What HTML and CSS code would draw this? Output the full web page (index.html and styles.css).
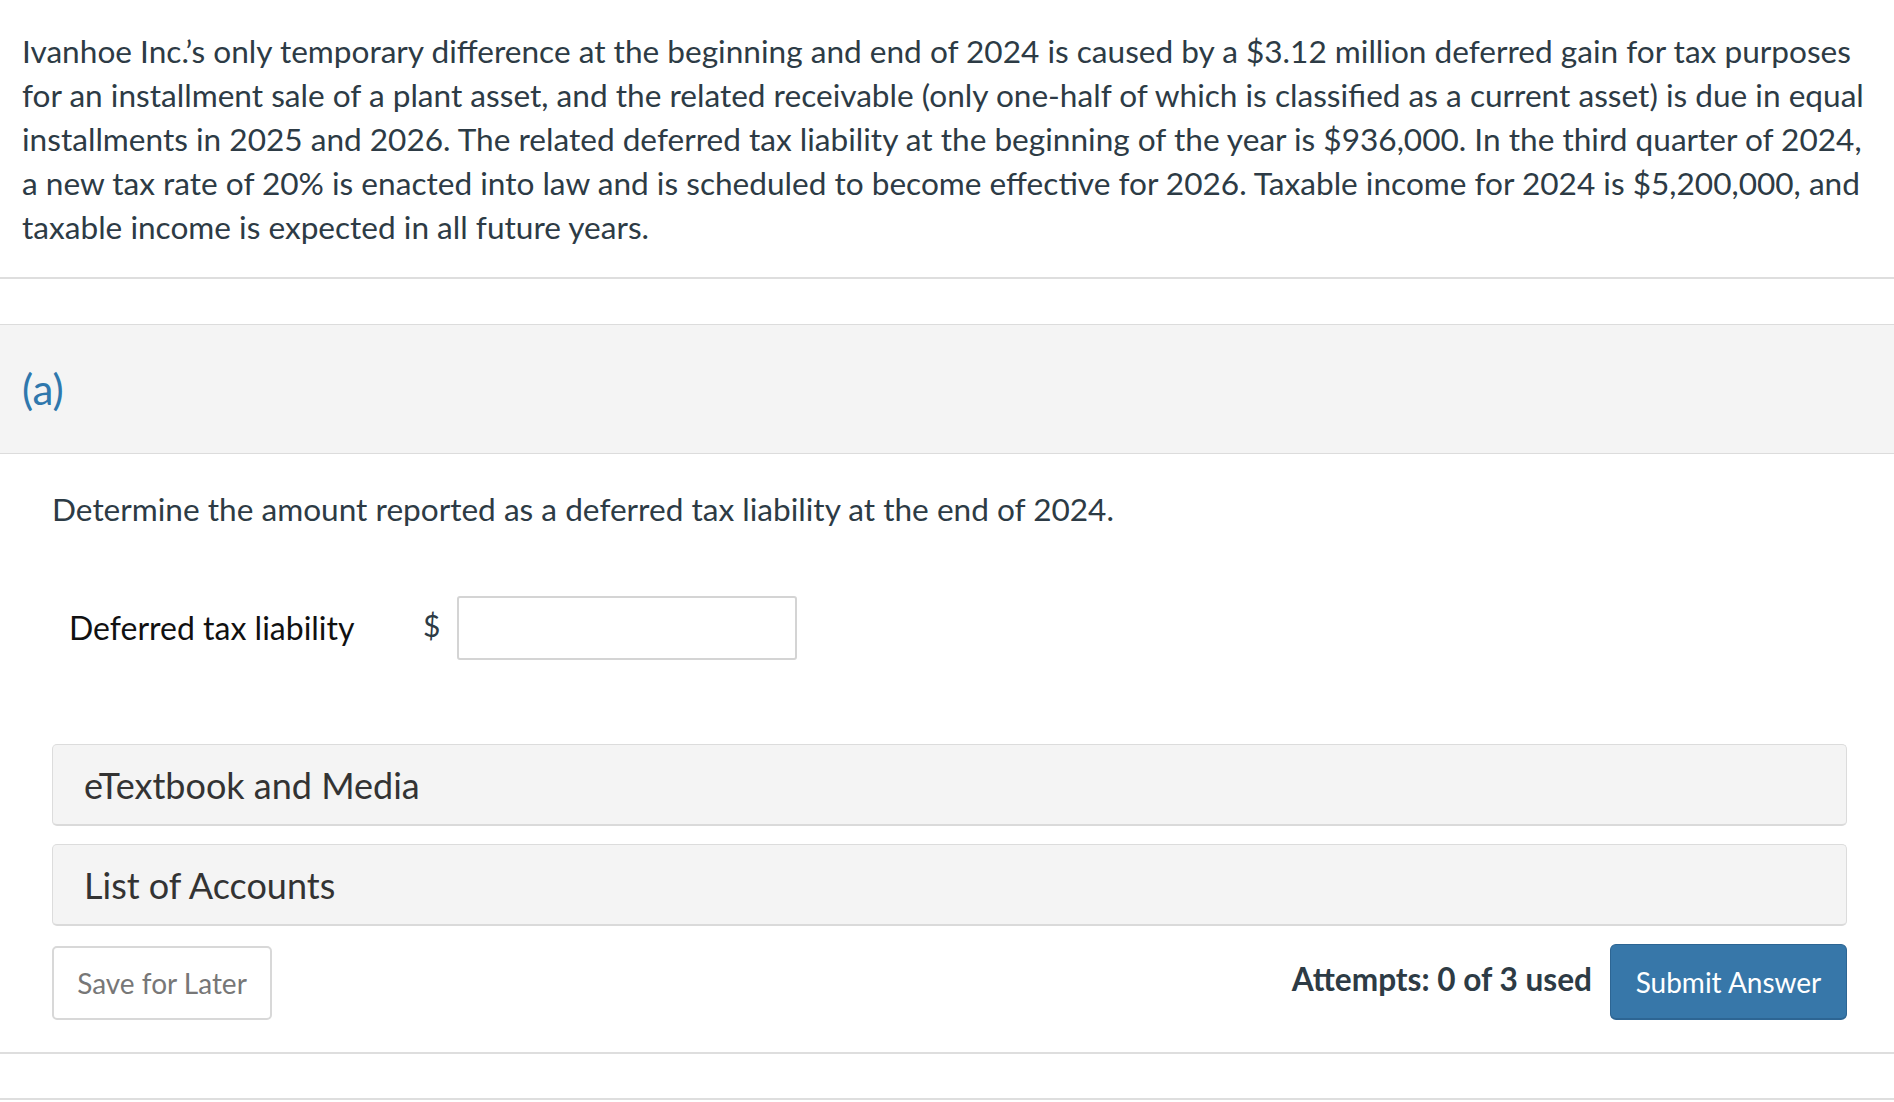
FILE: index.html
```html
<!DOCTYPE html>
<html lang="en">
<head>
<meta charset="utf-8">
<title>Question</title>
<link rel="stylesheet" href="styles.css">
</head>
<body>
<div class="stem">
  <p>Ivanhoe Inc.’s only temporary difference at the beginning and end of 2024 is caused by a $3.12 million deferred gain for tax purposes for an installment sale of a plant asset, and the related receivable (only one-half of which is classified as a current asset) is due in equal installments in 2025 and 2026. The related deferred tax liability at the beginning of the year is $936,000. In the third quarter of 2024, a new tax rate of 20% is enacted into law and is scheduled to become effective for 2026. Taxable income for 2024 is $5,200,000, and taxable income is expected in all future years.</p>
</div>
<div class="part">
  <div class="part-head"><span class="part-label">(a)</span></div>
  <div class="part-body">
    <p class="prompt">Determine the amount reported as a deferred tax liability at the end of 2024.</p>
    <div class="answer-row">
      <label class="answer-label" for="dtl">Deferred tax liability</label>
      <span class="dollar">$</span>
      <input id="dtl" class="answer-input" type="text">
    </div>
    <div class="card">eTextbook and Media</div>
    <div class="card">List of Accounts</div>
    <div class="actions">
      <button class="btn-save" type="button">Save for Later</button>
      <div class="spacer"></div>
      <span class="attempts">Attempts: 0 of 3 used</span>
      <button class="btn-submit" type="button">Submit Answer</button>
    </div>
  </div>
</div>
<div class="after"></div>
</body>
</html>
```
FILE: styles.css
```css
* { box-sizing: border-box; }
html, body { margin: 0; padding: 0; background: #fff; }
body {
  font-family: Lato, "Open Sans", sans-serif;
  color: #2d3b45;
  font-size: 31.6px;
  line-height: 44px;
}
.stem {
  padding: 29px 22px 28px 22px;
  border-bottom: 2px solid #dedede;
}
.stem p { margin: 0; }

.part {
  margin-top: 45px;
  border-top: 1px solid #dcdcdc;
  border-bottom: 2px solid #dedede;
  padding-bottom: 32px;
}
.part-head {
  height: 129px;
  background: #f4f4f4;
  border-bottom: 1px solid #dcdcdc;
  padding-left: 22px;
  display: flex;
  align-items: center;
}
.part-label {
  color: #2f78ad;
  font-size: 42px;
}
.part-body {
  padding: 0 47px 0 52px;
}
.prompt {
  margin: 33px 0 0 0;
}
.answer-row {
  margin-top: 65px;
  display: flex;
  align-items: center;
  padding-left: 17px;
}
.answer-label {
  color: #111;
  width: 354px;
  font-size: 32px;
}
.dollar {
  width: 34px;
  margin-top: -6px;
  font-size: 30px;
}
.answer-input {
  width: 340px;
  height: 64px;
  border: 2px solid #d4d4d4;
  border-radius: 3px;
  background: #fff;
  font: inherit;
  outline: none;
}
.card {
  margin-top: 18px;
  height: 82px;
  background: #f4f4f4;
  border: 1px solid #dcdcdc;
  border-bottom: 2px solid #dadada;
  border-radius: 5px;
  padding-left: 31px;
  display: flex;
  align-items: center;
  color: #333;
  font-size: 36px;
}
.answer-row + .card { margin-top: 84px; }
.actions {
  margin-top: 18px;
  display: flex;
  align-items: center;
}
.spacer { flex: 1; }
.btn-save {
  width: 220px;
  height: 74px;
  margin-top: 1px;
  background: #fff;
  border: 2px solid #d8d8d8;
  border-radius: 5px;
  color: #777;
  font-family: Lato, sans-serif;
  font-size: 28px;
  padding: 0;
}
.attempts {
  font-weight: 700;
  color: #2d3b45;
  font-size: 31.6px;
  margin-right: 18px;
  margin-top: -6px;
}
.btn-submit {
  width: 237px;
  height: 76px;
  background: #3777a9;
  border: 1px solid #2d6593;
  border-bottom-width: 2px;
  border-radius: 6px;
  color: #fff;
  font-family: Lato, sans-serif;
  font-size: 28px;
  padding: 0;
}
.after {
  margin-top: 44px;
  border-top: 2px solid #dedede;
  height: 10px;
}
```
